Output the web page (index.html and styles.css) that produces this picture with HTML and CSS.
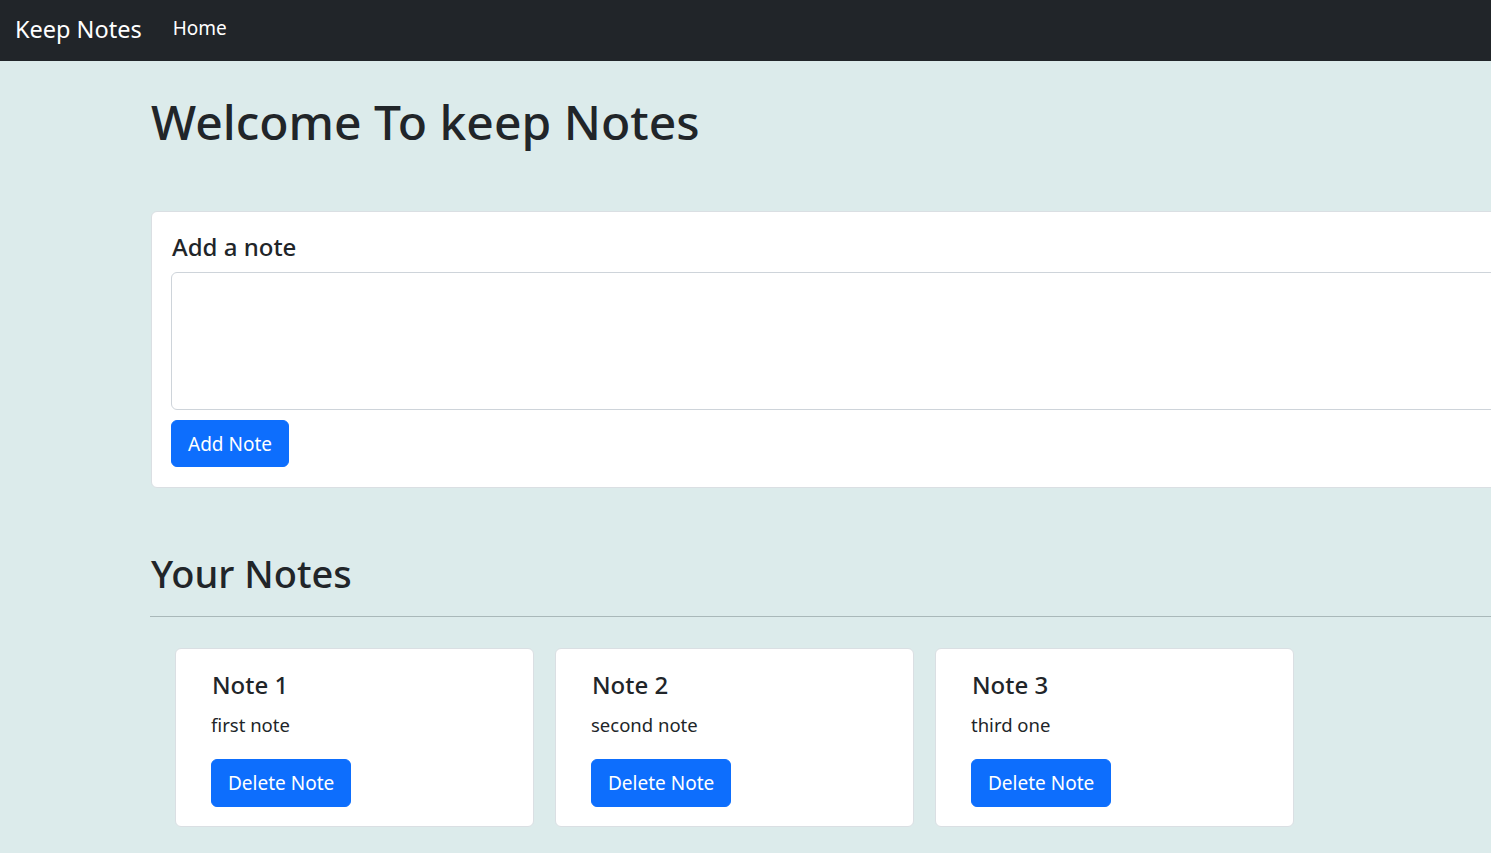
FILE: index.html
```html
<!DOCTYPE html>
<html lang="en">
<head>
<meta charset="utf-8">
<title>Keep Notes</title>
<link rel="stylesheet" href="styles.css">
</head>
<body>
<nav class="navbar">
  <a class="brand" href="#">Keep Notes</a>
  <a class="nav-link" href="#">Home</a>
</nav>
<main class="container">
  <h1 class="title">Welcome To keep Notes</h1>
  <section class="add-card">
    <h4 class="add-title">Add a note</h4>
    <textarea class="note-input" rows="5"></textarea>
    <button class="btn">Add Note</button>
  </section>
  <h2 class="section-title">Your Notes</h2>
  <hr class="divider">
  <div class="notes">
    <div class="note-card">
      <h5 class="note-title">Note 1</h5>
      <p class="note-text">first note</p>
      <button class="btn btn-del">Delete Note</button>
    </div>
    <div class="note-card">
      <h5 class="note-title">Note 2</h5>
      <p class="note-text">second note</p>
      <button class="btn btn-del">Delete Note</button>
    </div>
    <div class="note-card">
      <h5 class="note-title">Note 3</h5>
      <p class="note-text">third one</p>
      <button class="btn btn-del">Delete Note</button>
    </div>
  </div>
</main>
</body>
</html>
```
FILE: styles.css
```css
* { box-sizing: border-box; }
html, body { margin: 0; padding: 0; }
body {
  background: #dcebeb;
  font-family: "Noto Sans", "Open Sans", sans-serif;
  color: #212529;
  font-size: 20px;
  overflow: hidden;
  width: 1491px;
  height: 853px;
}
.navbar {
  background: #212529;
  height: 61px;
  display: flex;
  align-items: center;
  padding: 0 15px;
}
.brand {
  color: #fff;
  text-decoration: none;
  font-size: 23.5px;
  margin-right: 31px;
  margin-top: -4px;
}
.nav-link {
  color: #fff;
  text-decoration: none;
  font-size: 19px;
  margin-top: -6px;
}
.container {
  margin-left: 151px;
  width: 1420px;
}
.title {
  font-size: 48px;
  font-weight: 500;
  line-height: 1.2;
  margin: 0;
  padding-top: 32px;
  margin-bottom: 60px;
}
.add-card {
  background: #fff;
  border: 1px solid #dadfe3;
  border-radius: 6px;
  padding: 21px 20px 20px 19px;
  display: flex;
  flex-direction: column;
  align-items: flex-start;
}
.add-title {
  font-size: 24px;
  font-weight: 500;
  line-height: 1.2;
  margin: 0 0 11px 1px;
}
.note-input {
  width: 100%;
  height: 138px;
  border: 1px solid #ced4da;
  border-radius: 6px;
  resize: none;
  margin: 0 0 10px 0;
  font: inherit;
}
.btn {
  background: #0d6efd;
  color: #fff;
  border: 1px solid #0d6efd;
  border-radius: 6px;
  font-family: inherit;
  font-size: 19px;
  height: 47px;
  padding: 2px 16px 0 16px;
  line-height: 1;
}
.section-title {
  font-size: 38px;
  font-weight: 500;
  line-height: 1.2;
  margin: 63px 0 19px 0;
}
.divider {
  border: 0;
  border-top: 1px solid #a9b8b9;
  margin: 0 0 31px -1px;
}
.notes {
  display: flex;
  gap: 21px;
  padding-left: 24px;
}
.note-card {
  width: 359px;
  height: 179px;
  background: #fff;
  border: 1px solid #dadfe3;
  border-radius: 6px;
  padding: 22px 20px 20px 35px;
}
.note-title {
  font-size: 24px;
  font-weight: 500;
  line-height: 1.2;
  margin: 0 0 11px 1px;
}
.note-text {
  margin: 0 0 20px 0;
  font-size: 18.5px;
  line-height: 1.5;
}
.btn-del {
  height: 48px;
}
```
